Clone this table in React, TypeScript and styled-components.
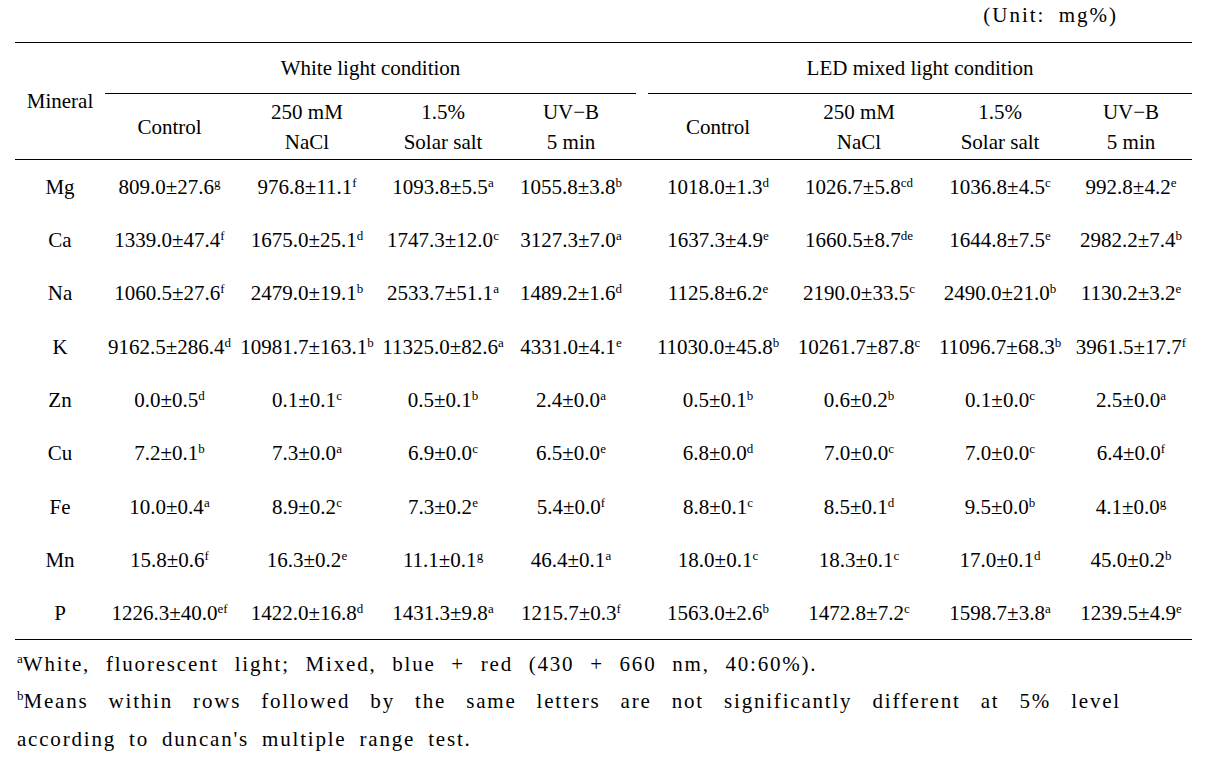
import React from "react";
import styled, { createGlobalStyle } from "styled-components";

const GlobalStyle = createGlobalStyle`
  html, body {
    margin: 0;
    padding: 0;
    background: #ffffff;
  }
  body {
    font-family: "Liberation Serif", "DejaVu Serif", "Times New Roman", serif;
    color: #000000;
  }
`;

const Page = styled.div`
  width: 1214px;
  height: 762px;
  overflow: hidden;
  display: flex;
  flex-direction: column;
  font-family: "Liberation Serif", "DejaVu Serif", "Times New Roman", serif;
`;

const UnitLine = styled.div`
  display: flex;
  justify-content: flex-end;
  height: 42px;
  padding-right: 96px;
  box-sizing: border-box;
  font-size: 21px;
  line-height: 30px;
  letter-spacing: 2px;
  word-spacing: 6px;
`;

const Table = styled.table`
  margin-left: 15px;
  width: 1177px;
  table-layout: fixed;
  border-collapse: separate;
  border-spacing: 0;
  font-family: inherit;
  font-size: 21px;
  color: #000;
`;

const Col = styled.col<{ $w: number }>`
  width: ${(p) => p.$w}px;
`;

const HeadCell = styled.th<{ $top?: boolean; $bottom?: boolean; $rule?: boolean }>`
  padding: 0;
  font-weight: 400;
  text-align: center;
  vertical-align: middle;
  line-height: 30px;
  white-space: nowrap;
  border-top: ${(p) => (p.$top ? "1px solid #000" : "none")};
  border-bottom: ${(p) => (p.$bottom || p.$rule ? "1px solid #000" : "none")};
`;

const GroupRow = styled.tr`
  height: 52px;
`;

const SubRow = styled.tr`
  height: 66px;
`;

const DataRow = styled.tr`
  height: 53.33px;
`;

const Cell = styled.td<{ $last?: boolean }>`
  padding: 0;
  text-align: center;
  vertical-align: middle;
  white-space: nowrap;
  line-height: 24px;
  border-bottom: ${(p) => (p.$last ? "1px solid #000" : "none")};
`;

const Sup = styled.sup`
  font-size: 13px;
  line-height: 0;
  vertical-align: 7px;
`;

const Notes = styled.div`
  padding-left: 17px;
  margin-top: 6px;
  font-size: 21px;
  line-height: 37.5px;
  letter-spacing: 1.8px;
  word-spacing: 6px;
`;

const NoteLine = styled.div<{ $justify?: boolean; $wide?: boolean }>`
  width: ${(p) => (p.$justify ? "1104px" : "auto")};
  text-align: ${(p) => (p.$justify ? "justify" : "left")};
  text-align-last: ${(p) => (p.$justify ? "justify" : "auto")};
  word-spacing: ${(p) => (p.$wide ? "8.7px" : "6px")};
  white-space: nowrap;
`;

const NoteSup = styled.sup`
  font-size: 13px;
  line-height: 0;
  vertical-align: 8px;
  letter-spacing: 0;
`;

type Val = [string, string];

const rows: { m: string; v: Val[] }[] = [
  {
    m: "Mg",
    v: [
      ["809.0±27.6", "g"], ["976.8±11.1", "f"], ["1093.8±5.5", "a"], ["1055.8±3.8", "b"],
      ["1018.0±1.3", "d"], ["1026.7±5.8", "cd"], ["1036.8±4.5", "c"], ["992.8±4.2", "e"],
    ],
  },
  {
    m: "Ca",
    v: [
      ["1339.0±47.4", "f"], ["1675.0±25.1", "d"], ["1747.3±12.0", "c"], ["3127.3±7.0", "a"],
      ["1637.3±4.9", "e"], ["1660.5±8.7", "de"], ["1644.8±7.5", "e"], ["2982.2±7.4", "b"],
    ],
  },
  {
    m: "Na",
    v: [
      ["1060.5±27.6", "f"], ["2479.0±19.1", "b"], ["2533.7±51.1", "a"], ["1489.2±1.6", "d"],
      ["1125.8±6.2", "e"], ["2190.0±33.5", "c"], ["2490.0±21.0", "b"], ["1130.2±3.2", "e"],
    ],
  },
  {
    m: "K",
    v: [
      ["9162.5±286.4", "d"], ["10981.7±163.1", "b"], ["11325.0±82.6", "a"], ["4331.0±4.1", "e"],
      ["11030.0±45.8", "b"], ["10261.7±87.8", "c"], ["11096.7±68.3", "b"], ["3961.5±17.7", "f"],
    ],
  },
  {
    m: "Zn",
    v: [
      ["0.0±0.5", "d"], ["0.1±0.1", "c"], ["0.5±0.1", "b"], ["2.4±0.0", "a"],
      ["0.5±0.1", "b"], ["0.6±0.2", "b"], ["0.1±0.0", "c"], ["2.5±0.0", "a"],
    ],
  },
  {
    m: "Cu",
    v: [
      ["7.2±0.1", "b"], ["7.3±0.0", "a"], ["6.9±0.0", "c"], ["6.5±0.0", "e"],
      ["6.8±0.0", "d"], ["7.0±0.0", "c"], ["7.0±0.0", "c"], ["6.4±0.0", "f"],
    ],
  },
  {
    m: "Fe",
    v: [
      ["10.0±0.4", "a"], ["8.9±0.2", "c"], ["7.3±0.2", "e"], ["5.4±0.0", "f"],
      ["8.8±0.1", "c"], ["8.5±0.1", "d"], ["9.5±0.0", "b"], ["4.1±0.0", "g"],
    ],
  },
  {
    m: "Mn",
    v: [
      ["15.8±0.6", "f"], ["16.3±0.2", "e"], ["11.1±0.1", "g"], ["46.4±0.1", "a"],
      ["18.0±0.1", "c"], ["18.3±0.1", "c"], ["17.0±0.1", "d"], ["45.0±0.2", "b"],
    ],
  },
  {
    m: "P",
    v: [
      ["1226.3±40.0", "ef"], ["1422.0±16.8", "d"], ["1431.3±9.8", "a"], ["1215.7±0.3", "f"],
      ["1563.0±2.6", "b"], ["1472.8±7.2", "c"], ["1598.7±3.8", "a"], ["1239.5±4.9", "e"],
    ],
  },
];

const colWidths = [90, 129, 146, 126, 130, 12, 140, 142, 140, 122];

const SubHeads = () => (
  <>
    <HeadCell $bottom>Control</HeadCell>
    <HeadCell $bottom>
      250 mM
      <br />
      NaCl
    </HeadCell>
    <HeadCell $bottom>
      1.5%
      <br />
      Solar salt
    </HeadCell>
    <HeadCell $bottom>
      UV−B
      <br />5 min
    </HeadCell>
  </>
);

export default function App() {
  return (
    <Page>
      <GlobalStyle />
      <UnitLine>(Unit: mg%)</UnitLine>
      <Table>
        <colgroup>
          {colWidths.map((w, i) => (
            <Col key={i} $w={w} />
          ))}
        </colgroup>
        <thead>
          <GroupRow>
            <HeadCell rowSpan={2} $top $bottom>
              Mineral
            </HeadCell>
            <HeadCell colSpan={4} $top $rule>
              White light condition
            </HeadCell>
            <HeadCell rowSpan={2} $top $bottom />
            <HeadCell colSpan={4} $top $rule>
              LED mixed light condition
            </HeadCell>
          </GroupRow>
          <SubRow>
            <SubHeads />
            <SubHeads />
          </SubRow>
        </thead>
        <tbody>
          {rows.map((r, ri) => {
            const last = ri === rows.length - 1;
            return (
              <DataRow key={r.m}>
                <Cell $last={last}>{r.m}</Cell>
                {r.v.slice(0, 4).map(([n, s], i) => (
                  <Cell key={i} $last={last}>
                    {n}
                    <Sup>{s}</Sup>
                  </Cell>
                ))}
                <Cell $last={last} />
                {r.v.slice(4).map(([n, s], i) => (
                  <Cell key={i + 4} $last={last}>
                    {n}
                    <Sup>{s}</Sup>
                  </Cell>
                ))}
              </DataRow>
            );
          })}
        </tbody>
      </Table>
      <Notes>
        <NoteLine $wide>
          <NoteSup>a</NoteSup>White, fluorescent light; Mixed, blue + red (430 + 660 nm, 40:60%).
        </NoteLine>
        <NoteLine $justify>
          <NoteSup>b</NoteSup>Means within rows followed by the same letters are not significantly different at 5% level
        </NoteLine>
        <NoteLine>according to duncan's multiple range test.</NoteLine>
      </Notes>
    </Page>
  );
}
